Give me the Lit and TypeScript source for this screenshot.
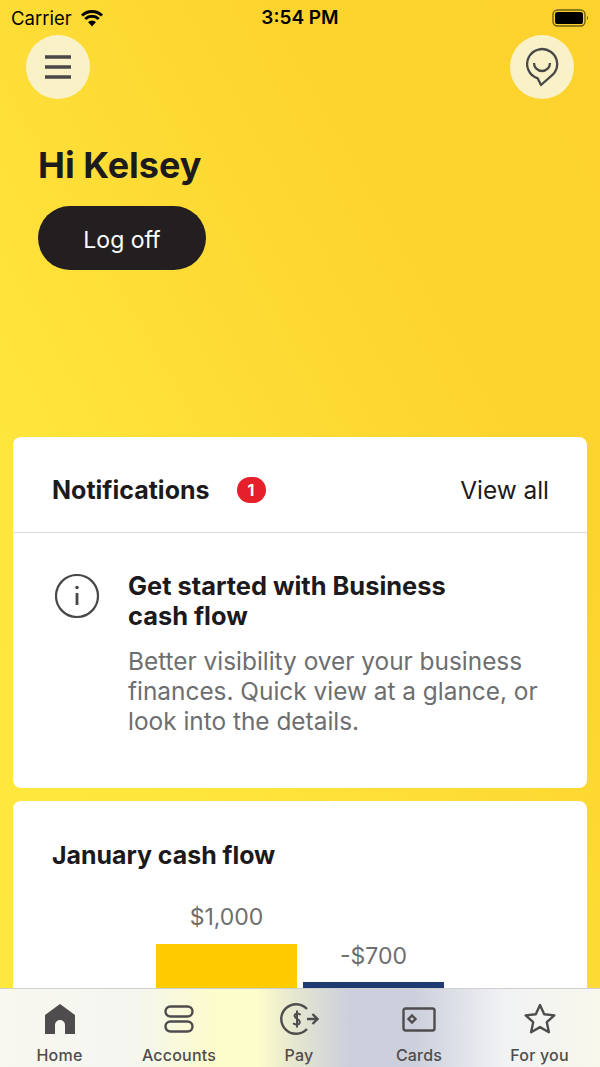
import { LitElement, html, css } from "lit";
import { customElement } from "lit/decorators.js";

@customElement("app-root")
export class AppRoot extends LitElement {
  static styles = css`
    :host { display: block; position: relative; width: 600px; height: 1067px; overflow: hidden;
      font-family: Inter, "Liberation Sans", sans-serif; color: #1c1a1c;
      background: linear-gradient(to top right, #ffe840 0%, #ffe63c 28%, #fedd36 50%, #fdd42e 72%, #fdd22e 100%); }
    .status { height: 35px; padding: 0 11px; box-sizing: border-box; display: grid; grid-template-columns: 1fr auto 1fr; align-items: center; font-size: 18.5px; color: #000; }
    .status .l { display: flex; align-items: center; gap: 8px; }
    .status .time { font-weight: 600; font-size: 19px; }
    .status .r { justify-self: end; display: flex; }
    .top { display: flex; justify-content: space-between; padding: 0 26px; }
    .round { width: 64px; height: 64px; border-radius: 50%; background: #f9f2c8; display: flex; align-items: center; justify-content: center; }
    .hero { padding: 43px 38px 0; height: 338px; box-sizing: border-box; }
    h1 { margin: 0; font-size: 36px; line-height: 46px; font-weight: 700; }
    .logoff { margin-top: 18px; width: 168px; height: 64px; box-sizing: border-box; padding-top: 3px; border-radius: 32px; background: #231f20; color: #fff; display: flex; align-items: center; justify-content: center; font-size: 23px; font-weight: 400; }
    .card { margin: 0 13px 13px; background: #fff; border-radius: 8px; }
    .nhead { height: 85px; padding: 10px 38px 0 39px; display: flex; align-items: center; border-bottom: 1px solid #d8d8d8; }
    .nhead b { font-size: 25px; font-weight: 700; }
    .badge { margin-left: 27px; width: 29px; height: 26px; border-radius: 13px; background: #e5202a; color: #fff; font-size: 16px; font-weight: 700; display: flex; align-items: center; justify-content: center; }
    .viewall { margin-left: auto; font-size: 24.4px; }
    .nbody { height: 255px; box-sizing: border-box; padding: 38px 40px 0 42px; display: flex; gap: 29px; }
    .nbody svg { flex: none; margin-top: 3px; }
    .ntitle { font-size: 25.4px; line-height: 30px; font-weight: 700; }
    .ndesc { margin-top: 15px; font-size: 24.4px; line-height: 30px; color: #6d6e70; }
    .flow { height: 300px; padding: 39px 39px 0; box-sizing: border-box; }
    .flow h2 { margin: 0; font-size: 24.9px; line-height: 30px; font-weight: 700; }
    .chart { margin: 32px 0 0 104px; display: flex; gap: 6px; }
    .col { width: 141px; text-align: center; color: #6d6e70; font-size: 23px; line-height: 30px; }
    .bar { margin-top: 12px; height: 100px; background: #ffcc00; }
    .bar.navy { margin-top: 11px; background: #1f3b72; }
    .col.low { padding-top: 39px; }
    .tabs { position: absolute; left: 0; right: 0; bottom: 0; height: 78px; border-top: 1px solid #cfcfcf; display: grid; grid-template-columns: 119px 120px 120px 120px 121px;
      background: linear-gradient(to right, #f8f8f0 0%, #f5f6f0 22%, #fdfccb 36%, #fdfccb 43%, #e6e7cf 49%, #ccd0dc 58%, #ccd0dc 69%, #f1f2f4 84%, #f9f8ec 100%); }
    .tab { display: flex; flex-direction: column; align-items: center; color: #4f4c4d; font-size: 16px; font-weight: 500; }
    .ico { height: 54px; padding-top: 14px; box-sizing: border-box; display: flex; align-items: flex-start; }
    .lab { line-height: 24px; letter-spacing: 0.2px; }
  `;

  render() {
    const st = "fill:none;stroke:#4f4c4d;stroke-width:2.4";
    const thin = "fill:none;stroke:#4f4c4d;stroke-width:2";
    return html`
      <div class="status">
        <div class="l">Carrier
          <svg width="24" height="18" viewBox="0 0 24 18"><path d="M12 17.500 8 13a6 6 0 0 1 8 0Z" fill="#000"/><path d="M2 6.500a14.500 14.500 0 0 1 20 0M5.200 10a10 10 0 0 1 13.600 0" fill="none" stroke="#000" stroke-width="3"/></svg>
        </div>
        <div class="time">3:54 PM</div>
        <div class="r">
          <svg width="37" height="18" viewBox="0 0 37 18"><rect x="1" y="1" width="32" height="16" rx="4.500" fill="none" stroke="#6f6212" stroke-width="1.400"/><rect x="3" y="3" width="28" height="12" rx="2.600" fill="#000"/><path d="M35 7v4a2 2 0 0 0 1-2 2 2 0 0 0-1-2Z" fill="#6f6212"/></svg>
        </div>
      </div>
      <div class="top">
        <div class="round">
          <svg width="28" height="26" viewBox="0 0 28 26"><path d="M1 3h26M1 13h26M1 23h26" stroke="#4a4748" stroke-width="3.400" fill="none"/></svg>
        </div>
        <div class="round">
          <svg width="34" height="40" viewBox="0 0 34 40"><path d="M12.800 31.400 16 38 28 27.400A15 15 0 1 0 12.800 31.400Z" fill="none" stroke="#4a4748" stroke-width="2.300" stroke-linejoin="round"/><path d="M9 16a8 8 0 0 0 16 0" fill="none" stroke="#4a4748" stroke-width="2.300"/></svg>
        </div>
      </div>
      <div class="hero">
        <h1>Hi Kelsey</h1>
        <div class="logoff">Log off</div>
      </div>
      <div class="card">
        <div class="nhead"><b>Notifications</b><span class="badge">1</span><span class="viewall">View all</span></div>
        <div class="nbody">
          <svg width="44" height="44" viewBox="0 0 44 44"><circle cx="22" cy="22" r="21" fill="none" stroke="#4a4748" stroke-width="2.200"/><path d="M22 19v12" stroke="#4a4748" stroke-width="2.800"/><circle cx="22" cy="13.500" r="1.800" fill="#4a4748"/></svg>
          <div>
            <div class="ntitle">Get started with Business<br>cash flow</div>
            <div class="ndesc">Better visibility over your business finances. Quick view at a glance, or look into the details.</div>
          </div>
        </div>
      </div>
      <div class="card flow">
        <h2>January cash flow</h2>
        <div class="chart">
          <div class="col">$1,000<div class="bar"></div></div>
          <div class="col low">-$700<div class="bar navy"></div></div>
        </div>
      </div>
      <div class="tabs">
        <div class="tab"><div class="ico"><svg width="32" height="32" viewBox="0 0 32 32"><path fill-rule="evenodd" d="M1 12 16 1l15 11v19H21V22a5 5 0 0 0-10 0v9H1Z" fill="#4f4c4d"/></svg></div><div class="lab">Home</div></div>
        <div class="tab"><div class="ico"><svg width="30" height="28" viewBox="0 0 30 28" style="margin-top:2px"><rect x="1.500" y="1.500" width="27" height="10" rx="5" style=${st}/><rect x="1.500" y="16.500" width="27" height="10" rx="5" style=${st}/></svg></div><div class="lab">Accounts</div></div>
        <div class="tab"><div class="ico"><svg width="40" height="34" viewBox="0 0 40 34" style="margin-top:-1px"><path d="M28 7A14.800 14.800 0 1 0 28 27" style=${st}/><path d="M21.500 13c-1-1.800-4.500-2.200-5.500-.5-1.300 2.500.8 3.500 2.500 4.500s3 2.300 1.800 4.500c-1 1.700-5 1.300-6-.5M18 8.500v17" style=${thin}/><path d="M28 17h10M33.500 12l5 5-5 5" style=${st}/></svg></div><div class="lab">Pay</div></div>
        <div class="tab"><div class="ico"><svg width="34" height="26" viewBox="0 0 34 26" style="margin-top:4px"><rect x="1.500" y="1.500" width="31" height="22" rx="2" style=${st}/><path d="M10 8.500l3.500 3.500-3.500 3.500-3.500-3.500Z" style=${st}/></svg></div><div class="lab">Cards</div></div>
        <div class="tab"><div class="ico"><svg width="32" height="32" viewBox="0 0 32 32"><path d="M16 2l4.200 9.300 10.100 1.100-7.500 6.800 2.100 10L16 24.100 7.100 29.200l2.100-10-7.500-6.800 10.100-1.100Z" style="${st};stroke-linejoin:round"/></svg></div><div class="lab">For you</div></div>
      </div>
    `;
  }
}
